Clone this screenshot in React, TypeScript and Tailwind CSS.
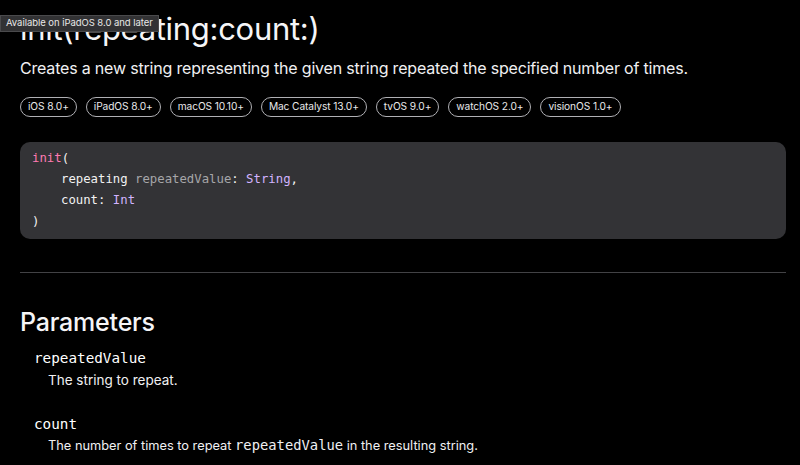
import React from "react";

const sans = { fontFamily: "Inter, 'Noto Sans', sans-serif" } as React.CSSProperties;
const mono = { fontFamily: "'DejaVu Sans Mono', 'Liberation Mono', monospace" } as React.CSSProperties;

const pills = [
  "iOS 8.0+",
  "iPadOS 8.0+",
  "macOS 10.10+",
  "Mac Catalyst 13.0+",
  "tvOS 9.0+",
  "watchOS 2.0+",
  "visionOS 1.0+",
];

export default function App() {
  return (
    <div className="relative w-[800px] h-[465px] overflow-hidden bg-black text-white" style={sans}>
      <div className="pl-[20px] pr-[14px]">
        <h1 className="text-[31px] leading-[40px] font-normal tracking-[-0.3px] mt-[9px] text-[#f5f5f7]">
          init(repeating:count:)
        </h1>
        <p className="text-[16px] leading-[24px] mt-[7px] tracking-[-0.19px] text-[#f0f0f2]">
          Creates a new string representing the given string repeated the specified number of times.
        </p>
        <div className="flex gap-[9px] mt-[17px]">
          {pills.map((p) => (
            <span
              key={p}
              className="h-[20px] flex items-center px-[7px] rounded-full border border-[#b0b0b4] text-[10.2px] tracking-[-0.1px] text-[#e8e8ea]"
            >
              {p}
            </span>
          ))}
        </div>
        <div
          className="mt-[25px] rounded-[10px] bg-[#333336] pl-[12px] pt-[6px] pb-[7px] text-[12.3px] leading-[21px] text-[#f2f2f2]"
          style={mono}
        >
          <div>
            <span className="text-[#ff7ab2]">init</span>(
          </div>
          <div className="pl-[29px]">
            repeating <span className="text-[#a6a6a9]">repeatedValue</span>: <span className="text-[#d2b4ff]">String</span>,
          </div>
          <div className="pl-[29px]">
            count: <span className="text-[#d2b4ff]">Int</span>
          </div>
          <div>)</div>
        </div>
        <div className="mt-[33px] h-px bg-[#424245]" />
        <h2 className="text-[25px] leading-[30px] font-medium mt-[34px] tracking-[-0.2px] text-[#f5f5f7]">Parameters</h2>
        <div className="pl-[14px] mt-[11px]">
          <div className="text-[14.3px] leading-[20px] font-normal" style={mono}>repeatedValue</div>
          <div className="pl-[14px] text-[13.5px] leading-[22px] mt-[1px] text-[#f0f0f2]">The string to repeat.</div>
          <div className="text-[14.3px] leading-[20px] font-normal mt-[23px]" style={mono}>count</div>
          <div className="pl-[14px] text-[12.8px] leading-[22px] mt-[0px] text-[#f0f0f2]">
            The number of times to repeat <span className="text-[13.8px]" style={mono}>repeatedValue</span> in the resulting string.
          </div>
        </div>
      </div>
      <div className="absolute left-0 top-[15px] h-[17px] px-[5px] flex items-center bg-[#323234] border border-[#4a4a4c] text-[9.5px] tracking-[-0.05px] text-[#e8e8e8]">
        Available on iPadOS 8.0 and later
      </div>
    </div>
  );
}
